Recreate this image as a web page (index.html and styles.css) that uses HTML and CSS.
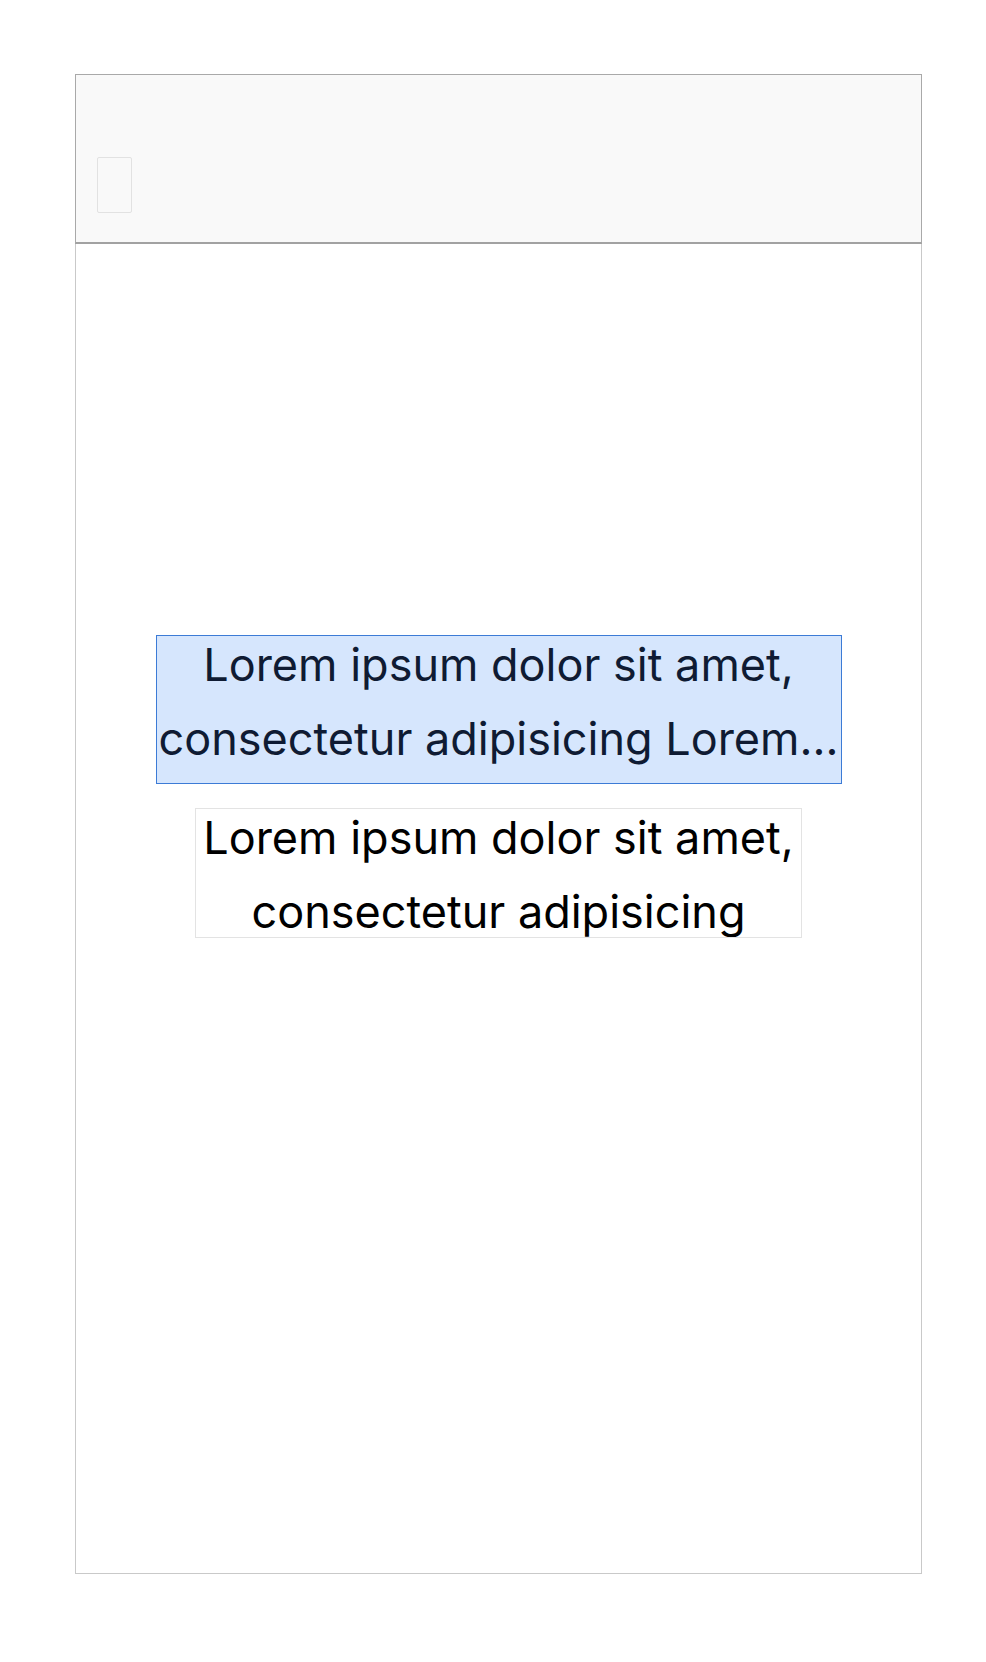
FILE: index.html
```html
<!DOCTYPE html>
<html>
<head>
<meta charset="utf-8">
<link rel="stylesheet" href="styles.css">
</head>
<body>
<div class="frame">
  <div class="header">
    <div class="header-btn"></div>
  </div>
  <div class="content">
    <div class="box box-selected">
      <div class="box-text">
        <div class="line">Lorem ipsum dolor sit amet,</div>
        <div class="line">consectetur adipisicing Lorem...</div>
      </div>
    </div>
    <div class="box box-plain">
      <div class="box-text">
        <div class="line">Lorem ipsum dolor sit amet,</div>
        <div class="line">consectetur adipisicing</div>
      </div>
    </div>
  </div>
</div>
</body>
</html>
```
FILE: styles.css
```css
html, body {
  margin: 0;
  padding: 0;
  background: #ffffff;
}
body {
  font-family: Inter, "Noto Sans", sans-serif;
}
.frame {
  margin: 74px 0 0 75px;
  width: 847px;
  height: 1500px;
  box-sizing: border-box;
  border: 1px solid #c9c9c9;
  border-top: none;
  display: flex;
  flex-direction: column;
}
.header {
  height: 170px;
  margin: 0 -1px;
  box-sizing: border-box;
  background: #f9f9f9;
  border: 1px solid #a9a9a9;
  border-bottom: 2px solid #a2a2a2;
  display: flex;
  align-items: flex-start;
  padding: 82px 0 0 21px;
}
.header-btn {
  width: 35px;
  height: 56px;
  box-sizing: border-box;
  border: 1px solid #e2e2e2;
  border-radius: 2px;
  background: #f9f9f9;
}
.content {
  flex: 1;
  display: flex;
  flex-direction: column;
  align-items: center;
  padding-top: 391px;
  gap: 24px;
}
.box {
  box-sizing: border-box;
  overflow: hidden;
  text-align: center;
  font-size: 45px;
  line-height: 74px;
}
.box-text {
  margin-top: -8px;
}
.line {
  white-space: nowrap;
}
.box-selected {
  width: 686px;
  height: 149px;
  background: #d6e6fd;
  border: 1px solid #3c7bd6;
  color: #0f1b33;
}
.box-plain {
  width: 607px;
  height: 130px;
  background: #ffffff;
  border: 1px solid #e3e3e3;
  color: #000000;
}
```
